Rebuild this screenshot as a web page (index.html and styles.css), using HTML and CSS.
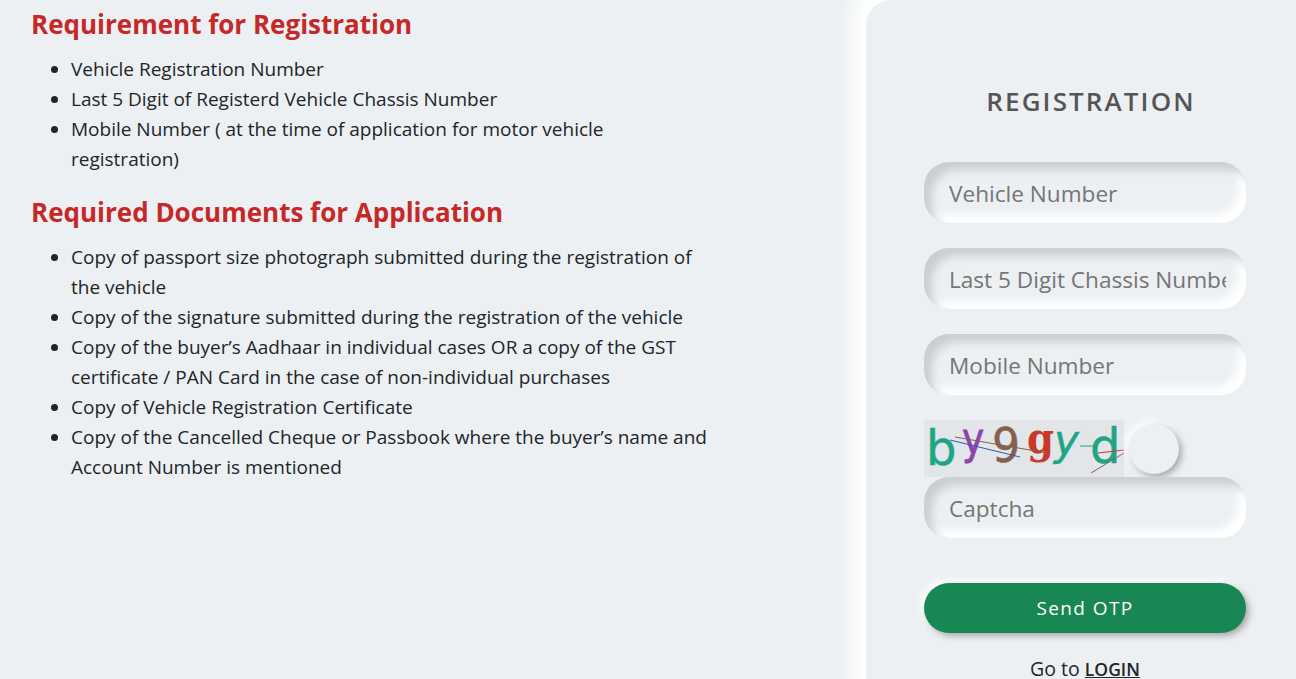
FILE: index.html
```html
<!DOCTYPE html>
<html lang="en">
<head>
    <meta charset="UTF-8">
    <meta name="viewport" content="width=device-width, initial-scale=1.0">
    <title>Registration</title>
    <link rel="stylesheet" href="styles.css">
</head>
<body>
    <div class="page">
        <div class="info">
            <h2>Requirement for Registration</h2>
            <ul>
                <li>Vehicle Registration Number</li>
                <li>Last 5 Digit of Registerd Vehicle Chassis Number</li>
                <li>Mobile Number ( at the time of application for motor vehicle registration)</li>
            </ul>
            <h2>Required Documents for Application</h2>
            <ul>
                <li>Copy of passport size photograph submitted during the registration of the vehicle</li>
                <li>Copy of the signature submitted during the registration of the vehicle</li>
                <li>Copy of the buyer’s Aadhaar in individual cases OR a copy of the GST certificate / PAN Card in the case of non-individual purchases</li>
                <li>Copy of Vehicle Registration Certificate</li>
                <li>Copy of the Cancelled Cheque or Passbook where the buyer’s name and Account Number is mentioned</li>
            </ul>
        </div>

        <div class="panel">
            <h3>REGISTRATION</h3>
            <form class="reg-form">
                <input class="field" type="text" placeholder="Vehicle Number">
                <input class="field" type="text" placeholder="Last 5 Digit Chassis Number">
                <input class="field" type="text" placeholder="Mobile Number">
                <div class="captcha-row">
                    <svg class="captcha" width="200" height="57" viewBox="0 0 200 57">
                        <rect width="200" height="57" fill="#e2e6e9"/>
                        <text transform="translate(2 45)" class="c-letter c-tall c-green">b</text>
                        <text transform="translate(38 34) scale(.85 1)" class="c-letter c-low c-purple">y</text>
                        <text transform="translate(68 42) scale(.92 1)" class="c-letter c-tall c-brown">9</text>
                        <text transform="translate(103 33) scale(.92 1)" class="c-letter c-bold c-red">g</text>
                        <text transform="translate(130 35)" class="c-letter c-slant c-green">y</text>
                        <text transform="translate(166 43)" class="c-letter c-tall c-green">d</text>
                        <path d="M26 20 L96 37" stroke="#2f56b0" stroke-width="1" fill="none"/>
                        <path d="M31 17 L123 33" stroke="#85604f" stroke-width="1" fill="none"/>
                        <path d="M156 26 L173 26" stroke="#1ea586" stroke-width="1" fill="none"/>
                        <path d="M174 33 L200 30" stroke="#c9392b" stroke-width="1" fill="none"/>
                        <path d="M167 53 L200 33" stroke="#85604f" stroke-width="1" fill="none"/>
                    </svg>
                    <button class="refresh" type="button" aria-label="Refresh captcha"></button>
                </div>
                <input class="field" type="text" placeholder="Captcha">
                <button class="send" type="button">Send OTP</button>
            </form>
            <p class="login-note">Go to <a href="#">LOGIN</a></p>
        </div>
    </div>
</body>
</html>
```

FILE: styles.css
```css
* {
    box-sizing: border-box;
}

html, body {
    height: 679px;
    overflow: hidden;
}

body {
    margin: 0;
    background-color: #ecf0f3;
    font-family: "Open Sans", "Noto Sans", Arial, sans-serif;
    font-size: 19px;
    line-height: 30px;
    color: #212529;
}

.page {
    display: flex;
    justify-content: space-between;
    align-items: flex-start;
    height: 679px;
    overflow: hidden;
}

.info {
    width: 681px;
    margin-left: 31px;
    padding-top: 4px;
}

.info h2 {
    margin: 0;
    font-size: 26px;
    line-height: 41px;
    font-weight: 700;
    color: #c62828;
}

.info ul {
    margin: 0 0 18px;
    padding-left: 40px;
    padding-top: 9px;
}

.panel {
    width: 430px;
    height: 760px;
    padding: 0 50px 0 58px;
    background-color: #ecf0f3;
    border-radius: 25px 0 0 0;
    box-shadow: -14px -14px 20px #fff;
}

.panel h3 {
    margin: 0;
    padding: 83px 0 0 12px;
    height: 162px;
    text-align: center;
    font-size: 26px;
    line-height: 36px;
    font-weight: 600;
    letter-spacing: 2.1px;
    color: #555;
}

.reg-form {
    display: flex;
    flex-direction: column;
}

.field {
    width: 322px;
    height: 61px;
    margin-bottom: 25px;
    padding: 2px 20px 0 25px;
    border: none;
    outline: none;
    border-radius: 25px;
    background-color: #ecf0f3;
    font-family: inherit;
    font-size: 22.6px;
    color: #212529;
    box-shadow: inset 8px 8px 8px #cbced1, inset -8px -8px 8px #fff;
}

.field::placeholder {
    color: #757575;
    opacity: 1;
}

.captcha-row {
    display: flex;
    align-items: center;
    gap: 5px;
    height: 57px;
}

.captcha {
    display: block;
    overflow: visible;
}

.c-letter {
    font-family: "DejaVu Sans", sans-serif;
}

.c-green {
    fill: #1ea586;
    stroke: #1ea586;
}

.c-purple {
    fill: #8e44ad;
    stroke: #8e44ad;
}

.c-brown {
    fill: #85604f;
    stroke: #85604f;
}

.c-red {
    fill: #c9392b;
    stroke: #c9392b;
}

.c-tall {
    font-size: 48px;
    stroke-width: 0.5;
}

.c-low {
    font-size: 44px;
    stroke-width: 0.8;
}

.c-bold {
    font-family: "DejaVu Serif", serif;
    font-weight: 700;
    font-size: 42px;
    stroke-width: 0;
}

.c-slant {
    font-style: italic;
    font-size: 42px;
    stroke-width: 0.5;
}

.refresh {
    width: 50px;
    height: 50px;
    padding: 0;
    border: none;
    border-radius: 50%;
    background-color: #ecf0f3;
    box-shadow: 3px 3px 6px #a8a8a8, -3px -3px 8px #fff;
}

.send {
    width: 322px;
    height: 50px;
    margin-top: 20px;
    border: none;
    border-radius: 25px;
    background-color: #198754;
    color: #fff;
    font-family: inherit;
    font-size: 19px;
    letter-spacing: 1.4px;
    box-shadow: 3px 3px 6px #a8a8a8, -3px -3px 8px #fff;
}

.login-note {
    margin: 21px 0 0;
    width: 322px;
    text-align: center;
    font-size: 19.5px;
}

.login-note a {
    color: #212529;
    font-size: 17.5px;
    font-weight: 600;
}
```
